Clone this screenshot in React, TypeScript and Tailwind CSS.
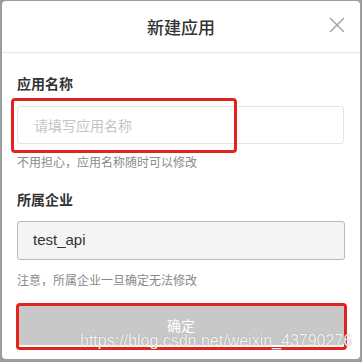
const cjk = { fontFamily: '"Noto Sans CJK SC", "Noto Sans", sans-serif' };

export default function App() {
  return (
    <div className="w-[362px] h-[362px] bg-[#9c9c9c] pt-px pl-[2px] overflow-hidden" style={cjk}>
      <div className="relative w-[358px] h-[358px] bg-white rounded-[4px] flex flex-col">
        {/* header */}
        <div className="relative h-[52px] border-b border-[#e6e6e6] flex items-center justify-center">
          <span className="text-[17px] font-medium text-[#333] leading-none">新建应用</span>
          <svg className="absolute left-[327px] top-[16px]" width="16" height="16" viewBox="0 0 16 16">
            <path d="M1 1 L15 15 M15 1 L1 15" stroke="#9e9e9e" strokeWidth="1.4" fill="none" />
          </svg>
        </div>

        {/* body */}
        <div className="flex flex-col px-[15px] pt-[20px]">
          <div className="text-[14px] leading-[20px] font-bold text-[#333]">应用名称</div>
          <div className="mt-[13px] h-[38px] w-[327px] border border-[#e4e4e4] rounded-[3px] flex items-center px-[16px]">
            <span className="text-[14px] text-[#c4c4c4]">请填写应用名称</span>
          </div>
          <div className="mt-[9px] text-[12px] leading-[18px] text-[#8a8a8a]">不用担心，应用名称随时可以修改</div>

          <div className="mt-[18px] text-[14px] leading-[20px] font-bold text-[#333]">所属企业</div>
          <div className="mt-[12px] h-[39px] w-[328px] bg-[#f4f4f4] border border-[#b9b9b9] rounded-[3px] flex items-center px-[15px]">
            <span className="text-[15px] text-[#333]" style={{ fontFamily: '"Liberation Sans", Arial, sans-serif' }}>test_api</span>
          </div>
          <div className="mt-[11px] text-[12px] leading-[18px] text-[#8a8a8a]">注意，所属企业一旦确定无法修改</div>

          <div className="mt-[16px] h-[40px] w-[326px] ml-[1px] bg-[#c8c8c8] rounded-[2px] flex items-center justify-center">
            <span className="text-[14px] text-white">确定</span>
          </div>
        </div>

        {/* red annotation boxes */}
        <div className="absolute left-[9px] top-[97px] w-[226px] h-[55px] border-[3px] border-[#e0241c] rounded-[4px]" />
        <div className="absolute left-[14px] top-[302px] w-[331px] h-[47px] border-[3px] border-[#e0241c] rounded-[4px]" />

        {/* watermark */}
        <div
          className="absolute left-[78px] top-[330px] text-[16px] leading-[20px] text-white/90 whitespace-nowrap"
          style={{ fontFamily: '"Liberation Sans", Arial, sans-serif', textShadow: "0 0 1px rgba(110,110,110,0.8)" }}
        >
          https://blog.csdn.net/weixin_43790276
        </div>
      </div>
    </div>
  );
}
